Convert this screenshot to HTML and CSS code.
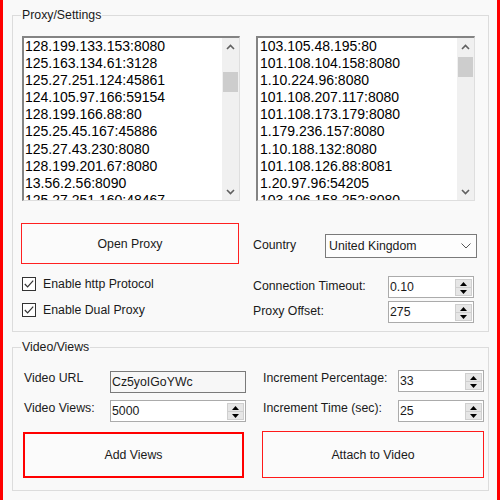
FILE: index.html
```html
<!DOCTYPE html>
<html>
<head>
<meta charset="utf-8">
<link rel="stylesheet" href="styles.css">
</head>
<body>
<div class="window">
  <fieldset class="group group-proxy">
    <legend>Proxy/Settings</legend>
    <div class="proxy-grid">
      <div class="col">
        <div class="listbox">
          <div class="items">
            <div>128.199.133.153:8080</div>
            <div>125.163.134.61:3128</div>
            <div>125.27.251.124:45861</div>
            <div>124.105.97.166:59154</div>
            <div>128.199.166.88:80</div>
            <div>125.25.45.167:45886</div>
            <div>125.27.43.230:8080</div>
            <div>128.199.201.67:8080</div>
            <div>13.56.2.56:8090</div>
            <div>125.27.251.160:48467</div>
          </div>
          <div class="vscroll">
            <span class="sarrow"><svg width="9" height="6" viewBox="0 0 9 6"><polyline points="1,5 4.5,1.5 8,5" fill="none" stroke="#606060" stroke-width="1.6"/></svg></span>
            <span class="thumb thumb-a"></span>
            <span class="sarrow sarrow-down"><svg width="9" height="6" viewBox="0 0 9 6"><polyline points="1,1 4.5,4.5 8,1" fill="none" stroke="#606060" stroke-width="1.6"/></svg></span>
          </div>
        </div>
        <button class="btn btn-open">Open Proxy</button>
        <label class="check check-1">
          <svg width="14" height="14" viewBox="0 0 14 14"><rect x="0.5" y="0.5" width="13" height="13" fill="#fff" stroke="#333"/><polyline points="2.8,7 5.6,9.8 11.2,3.6" fill="none" stroke="#333" stroke-width="1.2"/></svg>
          <span>Enable http Protocol</span>
        </label>
        <label class="check check-2">
          <svg width="14" height="14" viewBox="0 0 14 14"><rect x="0.5" y="0.5" width="13" height="13" fill="#fff" stroke="#333"/><polyline points="2.8,7 5.6,9.8 11.2,3.6" fill="none" stroke="#333" stroke-width="1.2"/></svg>
          <span>Enable Dual Proxy</span>
        </label>
      </div>
      <div class="col">
        <div class="listbox listbox-right">
          <div class="items">
            <div>103.105.48.195:80</div>
            <div>101.108.104.158:8080</div>
            <div>1.10.224.96:8080</div>
            <div>101.108.207.117:8080</div>
            <div>101.108.173.179:8080</div>
            <div>1.179.236.157:8080</div>
            <div>1.10.188.132:8080</div>
            <div>101.108.126.88:8081</div>
            <div>1.20.97.96:54205</div>
            <div>103.106.158.252:8080</div>
          </div>
          <div class="vscroll">
            <span class="sarrow"><svg width="9" height="6" viewBox="0 0 9 6"><polyline points="1,5 4.5,1.5 8,5" fill="none" stroke="#606060" stroke-width="1.6"/></svg></span>
            <span class="thumb thumb-b"></span>
            <span class="sarrow sarrow-down"><svg width="9" height="6" viewBox="0 0 9 6"><polyline points="1,1 4.5,4.5 8,1" fill="none" stroke="#606060" stroke-width="1.6"/></svg></span>
          </div>
        </div>
        <div class="field-row row-country">
          <span class="lbl lbl-country">Country</span>
          <div class="combo">
            <span>United Kingdom</span>
            <svg width="10" height="6" viewBox="0 0 10 6"><polyline points="0.5,0.5 5,5 9.5,0.5" fill="none" stroke="#555" stroke-width="1"/></svg>
          </div>
        </div>
        <div class="field-row row-timeout">
          <span class="lbl lbl-wide">Connection Timeout:</span>
          <div class="spin spin-small">
            <span class="val">0.10</span>
            <span class="arrows">
              <span class="abtn"><svg width="7" height="4" viewBox="0 0 7 4"><polygon points="0,4 3.5,0 7,4" fill="#000"/></svg></span>
              <span class="abtn"><svg width="7" height="4" viewBox="0 0 7 4"><polygon points="0,0 3.5,4 7,0" fill="#000"/></svg></span>
            </span>
          </div>
        </div>
        <div class="field-row row-offset">
          <span class="lbl lbl-wide">Proxy Offset:</span>
          <div class="spin spin-small">
            <span class="val">275</span>
            <span class="arrows">
              <span class="abtn"><svg width="7" height="4" viewBox="0 0 7 4"><polygon points="0,4 3.5,0 7,4" fill="#000"/></svg></span>
              <span class="abtn"><svg width="7" height="4" viewBox="0 0 7 4"><polygon points="0,0 3.5,4 7,0" fill="#000"/></svg></span>
            </span>
          </div>
        </div>
      </div>
    </div>
  </fieldset>

  <fieldset class="group group-video">
    <legend>Video/Views</legend>
    <div class="video-grid">
      <div class="field-row">
        <span class="lbl lbl-video">Video URL</span>
        <div class="textbox">Cz5yoIGoYWc</div>
      </div>
      <div class="field-row">
        <span class="lbl lbl-inc">Increment Percentage:</span>
        <div class="spin spin-small">
          <span class="val">33</span>
          <span class="arrows">
            <span class="abtn"><svg width="7" height="4" viewBox="0 0 7 4"><polygon points="0,4 3.5,0 7,4" fill="#000"/></svg></span>
            <span class="abtn"><svg width="7" height="4" viewBox="0 0 7 4"><polygon points="0,0 3.5,4 7,0" fill="#000"/></svg></span>
          </span>
        </div>
      </div>
      <div class="field-row">
        <span class="lbl lbl-video">Video Views:</span>
        <div class="spin spin-wide">
          <span class="val">5000</span>
          <span class="arrows">
            <span class="abtn"><svg width="7" height="4" viewBox="0 0 7 4"><polygon points="0,4 3.5,0 7,4" fill="#000"/></svg></span>
            <span class="abtn"><svg width="7" height="4" viewBox="0 0 7 4"><polygon points="0,0 3.5,4 7,0" fill="#000"/></svg></span>
          </span>
        </div>
      </div>
      <div class="field-row">
        <span class="lbl lbl-inc">Increment Time (sec):</span>
        <div class="spin spin-small">
          <span class="val">25</span>
          <span class="arrows">
            <span class="abtn"><svg width="7" height="4" viewBox="0 0 7 4"><polygon points="0,4 3.5,0 7,4" fill="#000"/></svg></span>
            <span class="abtn"><svg width="7" height="4" viewBox="0 0 7 4"><polygon points="0,0 3.5,4 7,0" fill="#000"/></svg></span>
          </span>
        </div>
      </div>
      <button class="btn btn-add">Add Views</button>
      <button class="btn btn-attach">Attach to Video</button>
    </div>
  </fieldset>
</div>
</body>
</html>
```

FILE: styles.css
```css
* { box-sizing: border-box; }
html, body { margin: 0; padding: 0; }
body {
  font-family: "Liberation Sans", Arial, sans-serif;
  font-size: 12.3px;
  color: #1a1a1a;
  background: #f9f9f9;
}
.window {
  width: 500px;
  height: 500px;
  border-left: 3px solid #ff0000;
  border-right: 3px solid #ff0000;
  background: #f9f9f9;
  padding: 7px 8px 0 9px;
}
.group {
  margin: 0;
  border: 1px solid #dcdcdc;
  min-width: 0;
}
.group legend {
  padding: 0 1px;
  line-height: 17px;
  font-size: 12.3px;
  color: #1a1a1a;
}
.group-proxy { padding: 12px 11px 8px 9px; }
.group-proxy legend { margin-left: -1px; }
.group-video { margin-top: 7px; padding: 14px 4px 12px 10px; }
.group-video legend { margin-left: -2px; }

.proxy-grid {
  display: grid;
  grid-template-columns: 218px 224px;
  column-gap: 13px;
  align-items: start;
}
.col { display: flex; flex-direction: column; }

.listbox {
  height: 165px;
  width: 218px;
  border-style: solid;
  border-width: 2px 1px 1px 2px;
  border-color: #848484 #dedede #dedede #848484;
  background: #fff;
  display: flex;
  overflow: hidden;
}
.listbox-right { width: 219px; margin-left: 3px; }
.listbox-right .items { padding-left: 2px; }
.items {
  flex: 1;
  padding: 0 0 0 1px;
  font-size: 14px;
  line-height: 17.1px;
  color: #000;
  overflow: hidden;
  white-space: nowrap;
}
.vscroll {
  width: 17px;
  background: #f0f0f0;
  display: flex;
  flex-direction: column;
  align-items: stretch;
}
.sarrow {
  height: 17px;
  display: flex;
  align-items: center;
  justify-content: center;
}
.sarrow-down { margin-top: auto; }
.thumb { height: 20px; background: #cdcdcd; margin: 0 1px; }
.thumb-a { margin-top: 17px; }
.thumb-b { margin-top: 2px; }

.btn {
  font-family: inherit;
  font-size: 12.3px;
  color: #1a1a1a;
  background: #fbfbfb;
  border: 1px solid #ff2020;
  padding: 0;
}
.btn-open { margin-top: 22px; height: 41px; width: 218px; margin-left: -1px; }

.check {
  display: flex;
  align-items: center;
  gap: 7px;
  height: 20px;
}
.check svg { display: block; flex: none; }
.check-1 { margin-top: 10px; }
.check-2 { margin-top: 6px; }

.field-row { display: flex; align-items: center; }
.lbl { flex: none; padding-bottom: 3px; white-space: nowrap; }
.lbl-country { width: 72px; }
.lbl-wide { width: 135px; }
.row-country { margin-top: 33px; height: 24px; }
.row-timeout { margin-top: 18px; height: 22px; }
.row-offset { margin-top: 3px; height: 22px; }

.combo {
  width: 152px;
  height: 24px;
  border: 1px solid #7a7a7a;
  background: #fdfdfd;
  display: flex;
  align-items: center;
  justify-content: space-between;
  padding: 0 5px 0 3px;
}
.combo svg { display: block; }

.spin {
  height: 22px;
  border: 1px solid #ababab;
  background: #fff;
  display: flex;
}
.spin-small { width: 86px; }
.spin-wide { width: 136px; }
.spin .val { flex: 1; padding-left: 1px; line-height: 20px; }
.arrows {
  width: 18px;
  display: flex;
  flex-direction: column;
  padding: 2px 1px 1px 0;
}
.abtn {
  flex: 1;
  background: #e6e6e6;
  border: 1px solid #cfcfcf;
  display: flex;
  align-items: center;
  justify-content: center;
}
.abtn + .abtn { border-top: none; }
.abtn svg { display: block; }

.video-grid {
  display: grid;
  grid-template-columns: 223px 222px;
  grid-template-rows: 22px 22px 48px;
  column-gap: 16px;
  row-gap: 8px;
}
.lbl-video { width: 87px; padding-left: 1px; padding-bottom: 6px; }
.lbl-inc { width: 136px; padding-left: 1px; padding-bottom: 6px; }
.textbox {
  width: 136px;
  height: 22px;
  border: 1px solid #7a7a7a;
  background: #f7f7f7;
  padding-left: 1px;
  line-height: 20px;
  margin-top: 1px;
}
.btn-add { border: 2px solid #ff0000; height: 46px; margin-top: 2px; width: 221px; }
.btn-attach { border-color: #ff1a1a; height: 47px; margin-top: 1px; width: 222px; }
```
